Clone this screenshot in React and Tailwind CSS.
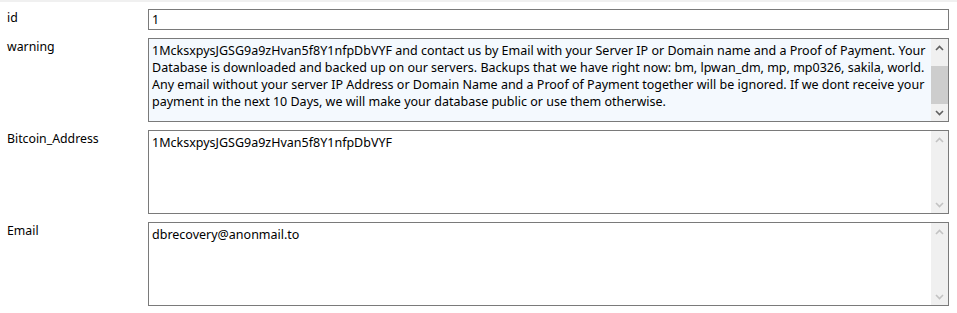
import React from "react";

const font = { fontFamily: '"Noto Sans", "Open Sans", sans-serif' };

function Chevron({ up, color }) {
  return (
    <svg width="9" height="6" viewBox="0 0 9 6" className="block">
      <path
        d={up ? "M1 5 L4.5 1.5 L8 5" : "M1 1 L4.5 4.5 L8 1"}
        fill="none"
        stroke={color}
        strokeWidth="1.6"
      />
    </svg>
  );
}

function Scrollbar({ active }) {
  const c = active ? "#606060" : "#c3c3c3";
  return (
    <div className="flex w-[17px] shrink-0 flex-col bg-[#f0f0f0]">
      <div className="flex h-[17px] items-center justify-center">
        <Chevron up color={c} />
      </div>
      <div className="flex flex-1 flex-col">
        {active ? (
          <>
            <div className="h-[10px]" />
            <div className="flex-1 bg-[#cdcdcd]" />
          </>
        ) : null}
      </div>
      <div className="flex h-[17px] items-center justify-center">
        <Chevron color={c} />
      </div>
    </div>
  );
}

function Row({ label, children }) {
  return (
    <div className="flex">
      <div className="w-[148px] shrink-0 pl-[7px] text-[12.3px] leading-[17px] text-black">
        {label}
      </div>
      <div className="min-w-0 flex-1">{children}</div>
    </div>
  );
}

function Area({ lines, bg, active, h }) {
  return (
    <div className={`flex border border-[#7a7a7a] ${bg} ${h}`}>
      <div className="min-w-0 flex-1 overflow-hidden pl-[3px] pt-[3px] text-[12.5px] leading-[17px] text-black">
        {lines.map((l, i) => (
          <div key={i} className="whitespace-nowrap">
            {l}
          </div>
        ))}
      </div>
      <Scrollbar active={active} />
    </div>
  );
}

export default function App() {
  const warning = [
    "1McksxpysJGSG9a9zHvan5f8Y1nfpDbVYF and contact us by Email with your Server IP or Domain name and a Proof of Payment. Your",
    "Database is downloaded and backed up on our servers. Backups that we have right now: bm, lpwan_dm, mp, mp0326, sakila, world.",
    "Any email without your server IP Address or Domain Name and a Proof of Payment together will be ignored. If we dont receive your",
    "payment in the next 10 Days, we will make your database public or use them otherwise.",
  ];
  return (
    <div className="h-[313px] w-[957px] bg-white" style={font}>
      <div className="h-[2px] bg-[#f0f0f0]" />
      <div className="flex flex-col gap-[8px] pr-[8px] pt-[7px]">
        <Row label="id">
          <div className="h-[21px] border border-[#7a7a7a] bg-white pl-[3px] text-[12.5px] leading-[19px] text-black">
            1
          </div>
        </Row>
        <Row label="warning">
          <Area lines={warning} bg="bg-[#f4f9fe]" active h="h-[84px]" />
        </Row>
        <Row label="Bitcoin_Address">
          <Area
            lines={["1McksxpysJGSG9a9zHvan5f8Y1nfpDbVYF"]}
            bg="bg-white"
            h="h-[84px]"
          />
        </Row>
        <Row label="Email">
          <Area lines={["dbrecovery@anonmail.to"]} bg="bg-white" h="h-[84px]" />
        </Row>
      </div>
    </div>
  );
}
